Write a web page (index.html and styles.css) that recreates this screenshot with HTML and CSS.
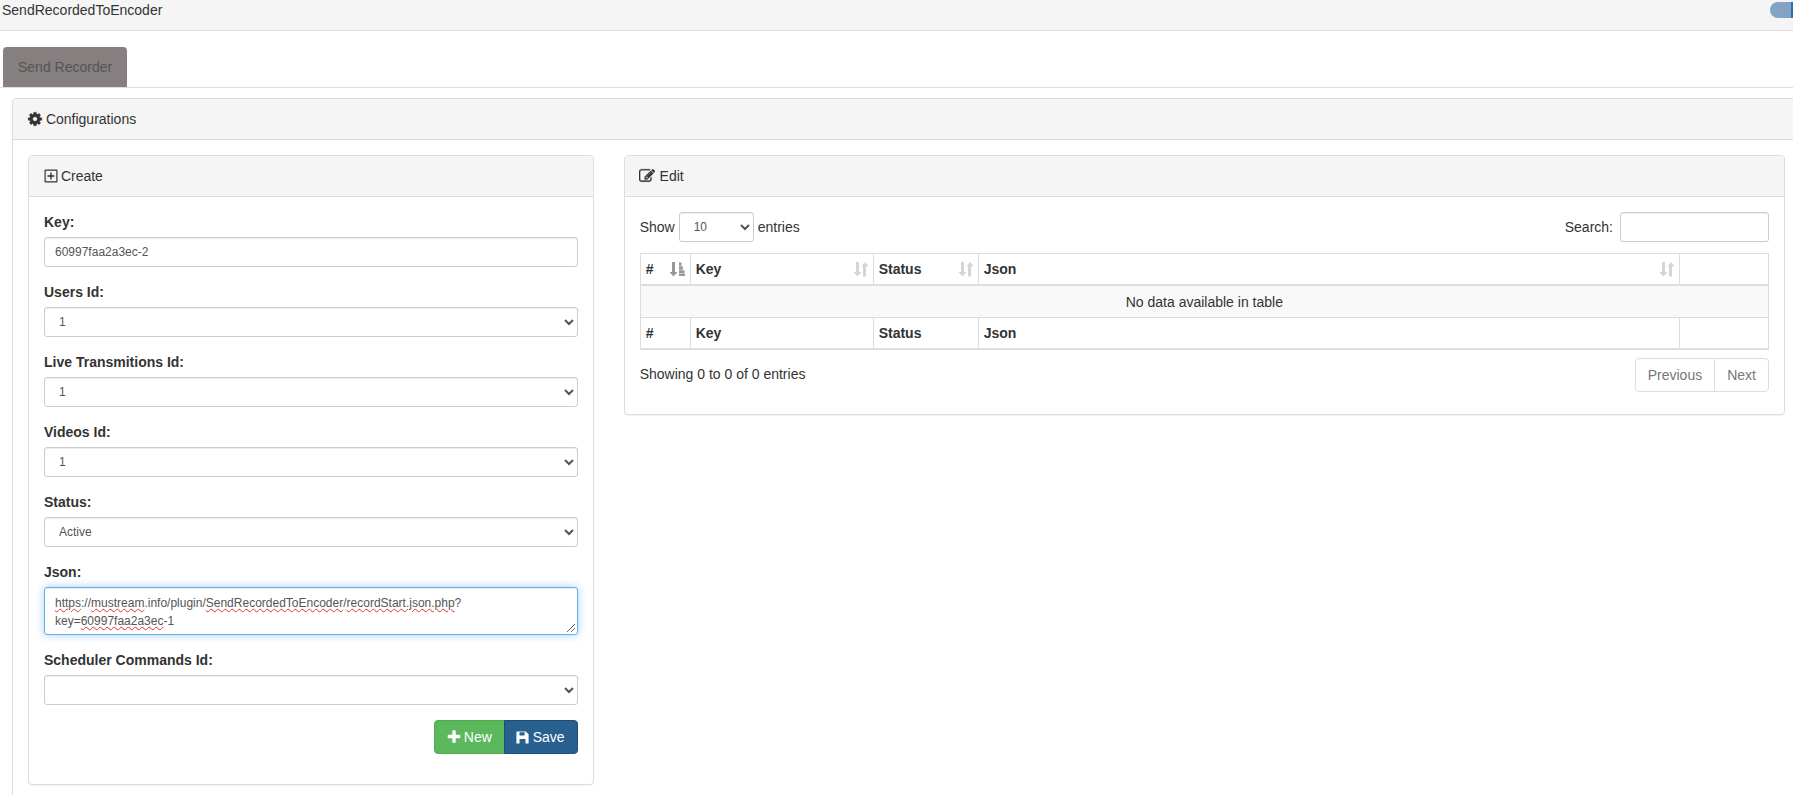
FILE: index.html
```html
<!DOCTYPE html>
<html lang="en">

<head>
  <meta charset="UTF-8">
  <title>SendRecordedToEncoder</title>
  <link rel="stylesheet" href="styles.css">
</head>

<body>
  <div class="plugin-bar">
    <span class="plugin-name">SendRecordedToEncoder</span>
    <span class="switch"><span class="switch-knob"></span></span>
  </div>

  <ul class="tabs">
    <li class="tab-active">Send Recorder</li>
  </ul>

  <div class="content">
    <div class="panel panel-config">
      <div class="panel-heading">
        <svg class="icon icon-cog" viewBox="0 0 1792 1792"><path d="M1152 896q0-106-75-181t-181-75-181 75-75 181 75 181 181 75 181-75 75-181zm512-109v222q0 12-8 23t-20 13l-185 28q-19 54-39 91 35 50 107 138 10 12 10 25t-9 23q-27 37-99 108t-94 71q-12 0-26-9l-138-108q-44 23-91 38-16 136-29 186-7 28-36 28h-222q-14 0-24.500-8.500t-11.500-21.500l-28-184q-49-16-90-37l-141 107q-10 9-25 9-14 0-25-11-126-114-165-168-7-10-7-23 0-12 8-23 15-21 51-66.500t54-70.500q-27-50-41-99l-183-27q-13-2-21-12.500t-8-23.500v-222q0-12 8-23t19-13l186-28q14-46 39-92-40-57-107-138-10-12-10-24 0-10 9-23 26-36 98.500-107.500t94.500-71.500q13 0 26 10l138 107q44-23 91-38 16-136 29-186 7-28 36-28h222q14 0 24.500 8.500t11.500 21.500l28 184q49 16 90 37l142-107q9-9 24-9 13 0 25 10 129 119 165 170 7 8 7 22 0 12-8 23-15 21-51 66.500t-54 70.500q26 50 41 98l183 28q13 2 21 12.500t8 23.500z"/></svg>
        Configurations
      </div>
      <div class="panel-body">
        <div class="row">
          <div class="col-create">
            <div class="panel">
              <div class="panel-heading">
                <svg class="icon icon-create" viewBox="0 0 16 16"><path fill-rule="evenodd" d="M2.500 1.500h11a1 1 0 0 1 1 1v11a1 1 0 0 1-1 1h-11a1 1 0 0 1-1-1v-11a1 1 0 0 1 1-1zM2.700 2.700v10.600h10.600V2.700zM7.300 4.500h1.400v2.800h2.800v1.400H8.700v2.800H7.300V8.700H4.500V7.300h2.800z"/></svg>
                Create
              </div>
              <div class="panel-body">
                <div class="form-group">
                  <label for="key">Key:</label>
                  <input class="form-control" id="key" type="text" value="60997faa2a3ec-2">
                </div>
                <div class="form-group">
                  <label for="usersId">Users Id:</label>
                  <select class="form-control" id="usersId"><option>1</option></select>
                </div>
                <div class="form-group">
                  <label for="liveId">Live Transmitions Id:</label>
                  <select class="form-control" id="liveId"><option>1</option></select>
                </div>
                <div class="form-group">
                  <label for="videosId">Videos Id:</label>
                  <select class="form-control" id="videosId"><option>1</option></select>
                </div>
                <div class="form-group">
                  <label for="status">Status:</label>
                  <select class="form-control" id="status"><option>Active</option></select>
                </div>
                <div class="form-group">
                  <label>Json:</label>
                  <div class="form-control json-box">
                    <span class="typo">https</span>://<span class="typo">mustream</span>.info/plugin/<span class="typo">SendRecordedToEncoder</span>/<span class="typo">recordStart.json.php</span>?<br>
                    key=<span class="typo">60997faa2a3ec</span>-1
                    <svg class="grip" viewBox="0 0 10 10"><path d="M9 1 1 9M9 5 5 9"/></svg>
                  </div>
                </div>
                <div class="form-group">
                  <label for="schedulerId">Scheduler Commands Id:</label>
                  <select class="form-control" id="schedulerId"><option></option></select>
                </div>
                <div class="form-actions">
                  <button class="btn btn-new">
                    <svg class="icon icon-new" viewBox="0 0 1792 1792"><path d="M1600 736v192q0 40-28 68t-68 28h-416v416q0 40-28 68t-68 28h-192q-40 0-68-28t-28-68v-416h-416q-40 0-68-28t-28-68v-192q0-40 28-68t68-28h416v-416q0-40 28-68t68-28h192q40 0 68 28t28 68v416h416q40 0 68 28t28 68z"/></svg>
                    New
                  </button>
                  <button class="btn btn-save">
                    <svg class="icon icon-save" viewBox="0 0 16 16"><path fill-rule="evenodd" d="M2 1.500h9.500l3 3v9.500a.5.5 0 0 1-.5.5H2a.5.5 0 0 1-.5-.5V2a.5.5 0 0 1 .5-.5zM4.800 2.500v3.400h5.400V2.500zM4.800 9.500v5h6.400v-5z"/></svg>
                    Save
                  </button>
                </div>
              </div>
            </div>
          </div>

          <div class="col-edit">
            <div class="panel">
              <div class="panel-heading">
                <svg class="icon icon-edit" viewBox="0 0 1792 1792"><path d="M888 1184l116-116-152-152-116 116v56h96v96h56zm440-720q-16-16-33 1l-350 350q-17 17-1 33t33-1l350-350q17-17 1-33zm80 594v190q0 119-84.500 203.500t-203.500 84.500h-832q-119 0-203.500-84.500t-84.500-203.500v-832q0-119 84.500-203.500t203.500-84.500h832q63 0 117 25 15 7 18 23 3 17-9 29l-49 49q-14 14-32 8-23-6-45-6h-832q-66 0-113 47t-47 113v832q0 66 47 113t113 47h832q66 0 113-47t47-113v-126q0-13 9-22l64-64q15-15 35-7t20 29zm-96-738l288 288-672 672h-288v-288zm444 132l-92 92-288-288 92-92q28-28 68-28t68 28l152 152q28 28 28 68t-28 68z"/></svg>
                Edit
              </div>
              <div class="panel-body">
                <div class="dt-top">
                  <div class="dt-length">
                    Show
                    <select class="form-control dt-select"><option>10</option></select>
                    entries
                  </div>
                  <div class="dt-search">
                    Search:
                    <input class="form-control dt-input" type="search">
                  </div>
                </div>

                <table class="dt-table">
                  <colgroup>
                    <col class="col-num">
                    <col class="col-key">
                    <col class="col-status">
                    <col class="col-json">
                    <col class="col-op">
                  </colgroup>
                  <thead>
                    <tr>
                      <th>#<svg class="sort sort-on" viewBox="0 0 16 16"><path d="M3 1h3v10h2.500L4.500 15.500.5 11H3zM10 1.500h2.500v3.200H10zM10 5.200h3.800v3.600H10zM10 9.300h5.500v2.800H10zM10 12.500h6V15h-6z"/></svg></th>
                      <th>Key<svg class="sort" viewBox="0 0 16 16"><path d="M4 1h3v10h2.500L5.500 15.500 1.500 11H4zM9.500 5.500 13 1l3.500 4.500H14v10h-3v-10z"/></svg></th>
                      <th>Status<svg class="sort" viewBox="0 0 16 16"><path d="M4 1h3v10h2.500L5.500 15.500 1.500 11H4zM9.500 5.500 13 1l3.500 4.500H14v10h-3v-10z"/></svg></th>
                      <th>Json<svg class="sort" viewBox="0 0 16 16"><path d="M4 1h3v10h2.500L5.500 15.500 1.500 11H4zM9.500 5.500 13 1l3.500 4.500H14v10h-3v-10z"/></svg></th>
                      <th></th>
                    </tr>
                  </thead>
                  <tbody>
                    <tr>
                      <td colspan="5">No data available in table</td>
                    </tr>
                  </tbody>
                  <tfoot>
                    <tr>
                      <th>#</th>
                      <th>Key</th>
                      <th>Status</th>
                      <th>Json</th>
                      <th></th>
                    </tr>
                  </tfoot>
                </table>

                <div class="dt-bottom">
                  <div class="dt-info">Showing 0 to 0 of 0 entries</div>
                  <ul class="pagination">
                    <li>Previous</li>
                    <li>Next</li>
                  </ul>
                </div>
              </div>
            </div>
          </div>
        </div>
      </div>
    </div>
  </div>
</body>

</html>
```

FILE: styles.css
```css
* {
  box-sizing: border-box;
}

html,
body {
  height: 100%;
  overflow: hidden;
}

body {
  margin: 0;
  font-family: "Liberation Sans", Arial, sans-serif;
  font-size: 14px;
  line-height: 20px;
  color: #333;
  background-color: #fff;
}

.icon {
  width: 16px;
  height: 16px;
  margin-left: -1px;
  vertical-align: -3px;
  fill: currentColor;
}

.icon-cog {
  margin-right: -1px;
}

.icon-cog path,
.icon-edit path {
  stroke: currentColor;
  stroke-width: 36;
}

.icon-create {
  margin-right: -2px;
}

.icon-edit {
  margin-right: 1px;
}

.icon-new {
  margin-right: -2px;
}

.icon-save {
  width: 15px;
  height: 15px;
  margin-left: -2px;
  margin-right: -1px;
}

/* top bar */
.plugin-bar {
  display: flex;
  justify-content: space-between;
  height: 31px;
  padding-left: 2px;
  border-bottom: 1px solid #ddd;
  background-color: #f5f5f5;
}

.switch {
  width: 23px;
  height: 16px;
  margin-top: 2px;
  border-radius: 8px 0 0 8px;
  background-color: #83a3c4;
}

.switch-knob {
  display: block;
  width: 2px;
  height: 16px;
  margin-left: 21px;
  background-color: #2a6fb0;
}

/* tabs */
.tabs {
  height: 57px;
  margin: 0;
  padding: 16px 0 0 3px;
  list-style: none;
  border-bottom: 1px solid #ddd;
}

.tab-active {
  width: 124px;
  height: 40px;
  padding: 10px 15px;
  border-radius: 4px 4px 0 0;
  white-space: nowrap;
  color: #555;
  background-color: #857f7f;
}

.content {
  padding: 10px 0 0 12px;
}

/* panels */
.panel {
  border: 1px solid #ddd;
  border-radius: 4px;
  background-color: #fff;
  box-shadow: 0 1px 1px rgba(0, 0, 0, .05);
}

.panel-config {
  width: 1789px;
}

.panel-heading {
  padding: 10px 15px;
  border-bottom: 1px solid #ddd;
  border-radius: 3px 3px 0 0;
  background-color: #f5f5f5;
}

.panel-body {
  padding: 15px;
}

.row {
  display: flex;
  margin: 0 -15px;
}

.col-create {
  width: 33.33333%;
  padding: 0 15px;
}

.col-edit {
  width: 66.66667%;
  padding: 0 15px;
}

/* form */
.form-group {
  margin-bottom: 15px;
}

label {
  display: block;
  margin-bottom: 5px;
  font-weight: bold;
}

.form-control {
  display: block;
  width: 100%;
  height: 30px;
  padding: 5px 10px;
  border: 1px solid #ccc;
  border-radius: 3px;
  font-family: inherit;
  font-size: 12px;
  line-height: 18px;
  color: #555;
  background-color: #fff;
  box-shadow: inset 0 1px 1px rgba(0, 0, 0, .075);
}

.json-box {
  position: relative;
  height: 48px;
  padding-top: 6px;
  border-color: #66afe9;
  box-shadow: inset 0 1px 1px rgba(0, 0, 0, .075), 0 0 8px rgba(102, 175, 233, .6);
}

.typo {
  text-decoration: underline wavy #e03030 1px;
  text-underline-offset: 1px;
}

.grip {
  position: absolute;
  right: 1px;
  bottom: 1px;
  width: 10px;
  height: 10px;
  fill: none;
  stroke: #666;
  stroke-width: 1;
}

.form-actions {
  display: flex;
  justify-content: flex-end;
  padding-bottom: 15px;
}

.btn {
  height: 34px;
  padding: 6px 12px;
  border: 1px solid transparent;
  font-family: inherit;
  font-size: 14px;
  line-height: 20px;
  color: #fff;
}

.btn-new {
  border-color: #4cae4c;
  border-radius: 4px 0 0 4px;
  background-color: #5cb85c;
}

.btn-save {
  margin-left: -1px;
  border-color: #204d74;
  border-radius: 0 4px 4px 0;
  background-color: #286090;
}

/* data table */
.dt-top {
  display: flex;
  justify-content: space-between;
  height: 30px;
  margin-bottom: 11px;
}

.dt-length {
  display: flex;
  align-items: center;
  gap: 4px;
}

.dt-search {
  display: flex;
  align-items: center;
  gap: 7px;
}

.dt-select {
  width: 75px;
}

.dt-input {
  width: 149px;
}

.dt-table {
  width: 100%;
  table-layout: fixed;
  border-collapse: collapse;
  border: 1px solid #ddd;
}

.col-num {
  width: 50px;
}

.col-key {
  width: 183px;
}

.col-status {
  width: 105px;
}

.col-op {
  width: 89px;
}

.dt-table th,
.dt-table td {
  height: 31px;
  padding: 5px;
  border: 1px solid #ddd;
  text-align: left;
}

.dt-table thead th,
.dt-table tfoot th {
  border-bottom-width: 2px;
}

.dt-table td {
  height: 32px;
  padding: 6px 5px 4px;
  text-align: center;
  background-color: #f9f9f9;
}

.sort {
  float: right;
  width: 16px;
  height: 16px;
  margin-top: 2px;
  fill: #333;
  opacity: .2;
}

.sort-on {
  opacity: .5;
}

.dt-bottom {
  display: flex;
  justify-content: space-between;
  margin-top: 8px;
  padding-bottom: 7px;
}

.dt-info {
  padding-top: 6px;
}

.pagination {
  display: flex;
  margin: 0;
  padding: 0;
  list-style: none;
}

.pagination li {
  height: 34px;
  padding: 6px 12px;
  border: 1px solid #ddd;
  color: #777;
}

.pagination li:first-child {
  border-radius: 4px 0 0 4px;
}

.pagination li:last-child {
  margin-left: -1px;
  border-radius: 0 4px 4px 0;
}
```
